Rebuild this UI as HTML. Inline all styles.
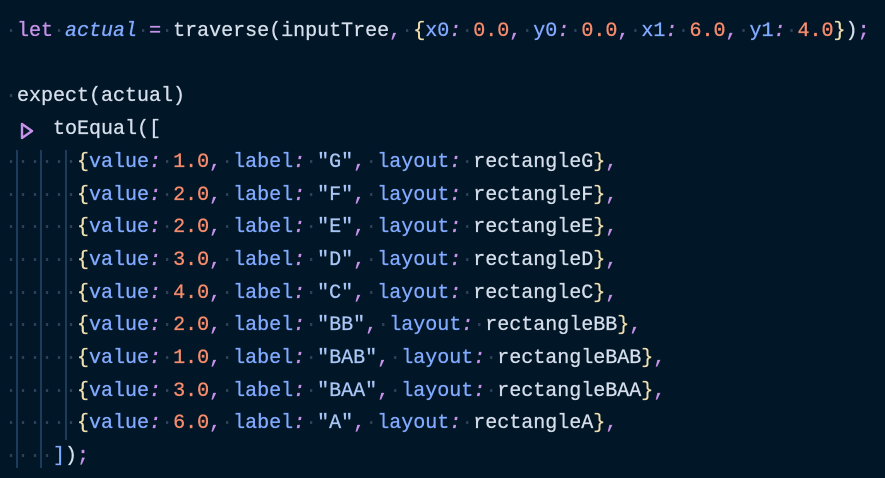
<!DOCTYPE html>
<html><head><meta charset="utf-8"><style>
html,body{margin:0;padding:0;background:#011627;width:885px;height:478px;overflow:hidden}
pre{margin:0;position:absolute;left:5px;top:16px;font-family:"Liberation Mono",monospace;font-size:20px;line-height:32.7px;color:#d6deeb;white-space:pre;-webkit-text-stroke:0.3px currentColor}
.k{color:#c792ea}.v{color:#82aaff;font-style:italic}.p{color:#82aaff}.n{color:#f78c6c}.c{color:#c792ea;font-style:italic}.cm{color:#c792ea}.s{color:#a9c6f5}.b{color:#f0dfaf}.d{color:#2e4058;-webkit-text-stroke:0}
.g{position:absolute;width:2px;background:#1d3b5a}
</style></head><body>
<div class="g" style="left:16px;top:150px;height:318px"></div>
<div class="g" style="left:40px;top:150px;height:318px"></div>
<div class="g" style="left:65px;top:150px;height:290px"></div>
<svg style="position:absolute;left:19px;top:122px" width="16" height="18" viewBox="0 0 16 18"><path d="M3 2 L13 9 L3 16 Z" fill="none" stroke="#c792ea" stroke-width="2.4" stroke-linejoin="round"/></svg>
<pre><span class="d">·</span><span class="k">let</span><span class="d">·</span><span class="v">actual</span><span class="d">·</span><span class="k">=</span><span class="d">·</span>traverse(inputTree<span class="cm">,</span><span class="d">·</span><span class="b">{</span><span class="p">x0</span><span class="c">:</span><span class="d">·</span><span class="n">0.0</span><span class="cm">,</span><span class="d">·</span><span class="p">y0</span><span class="c">:</span><span class="d">·</span><span class="n">0.0</span><span class="cm">,</span><span class="d">·</span><span class="p">x1</span><span class="c">:</span><span class="d">·</span><span class="n">6.0</span><span class="cm">,</span><span class="d">·</span><span class="p">y1</span><span class="c">:</span><span class="d">·</span><span class="n">4.0</span><span class="b">}</span>)<span class="cm">;</span>

<span class="d">·</span>expect(actual)
    toEqual([
<span class="d">······</span><span class="b">{</span><span class="p">value</span><span class="c">:</span><span class="d">·</span><span class="n">1.0</span><span class="cm">,</span><span class="d">·</span><span class="p">label</span><span class="c">:</span><span class="d">·</span><span class="s">"G"</span><span class="cm">,</span><span class="d">·</span><span class="p">layout</span><span class="c">:</span><span class="d">·</span>rectangleG<span class="b">}</span><span class="cm">,</span>
<span class="d">······</span><span class="b">{</span><span class="p">value</span><span class="c">:</span><span class="d">·</span><span class="n">2.0</span><span class="cm">,</span><span class="d">·</span><span class="p">label</span><span class="c">:</span><span class="d">·</span><span class="s">"F"</span><span class="cm">,</span><span class="d">·</span><span class="p">layout</span><span class="c">:</span><span class="d">·</span>rectangleF<span class="b">}</span><span class="cm">,</span>
<span class="d">······</span><span class="b">{</span><span class="p">value</span><span class="c">:</span><span class="d">·</span><span class="n">2.0</span><span class="cm">,</span><span class="d">·</span><span class="p">label</span><span class="c">:</span><span class="d">·</span><span class="s">"E"</span><span class="cm">,</span><span class="d">·</span><span class="p">layout</span><span class="c">:</span><span class="d">·</span>rectangleE<span class="b">}</span><span class="cm">,</span>
<span class="d">······</span><span class="b">{</span><span class="p">value</span><span class="c">:</span><span class="d">·</span><span class="n">3.0</span><span class="cm">,</span><span class="d">·</span><span class="p">label</span><span class="c">:</span><span class="d">·</span><span class="s">"D"</span><span class="cm">,</span><span class="d">·</span><span class="p">layout</span><span class="c">:</span><span class="d">·</span>rectangleD<span class="b">}</span><span class="cm">,</span>
<span class="d">······</span><span class="b">{</span><span class="p">value</span><span class="c">:</span><span class="d">·</span><span class="n">4.0</span><span class="cm">,</span><span class="d">·</span><span class="p">label</span><span class="c">:</span><span class="d">·</span><span class="s">"C"</span><span class="cm">,</span><span class="d">·</span><span class="p">layout</span><span class="c">:</span><span class="d">·</span>rectangleC<span class="b">}</span><span class="cm">,</span>
<span class="d">······</span><span class="b">{</span><span class="p">value</span><span class="c">:</span><span class="d">·</span><span class="n">2.0</span><span class="cm">,</span><span class="d">·</span><span class="p">label</span><span class="c">:</span><span class="d">·</span><span class="s">"BB"</span><span class="cm">,</span><span class="d">·</span><span class="p">layout</span><span class="c">:</span><span class="d">·</span>rectangleBB<span class="b">}</span><span class="cm">,</span>
<span class="d">······</span><span class="b">{</span><span class="p">value</span><span class="c">:</span><span class="d">·</span><span class="n">1.0</span><span class="cm">,</span><span class="d">·</span><span class="p">label</span><span class="c">:</span><span class="d">·</span><span class="s">"BAB"</span><span class="cm">,</span><span class="d">·</span><span class="p">layout</span><span class="c">:</span><span class="d">·</span>rectangleBAB<span class="b">}</span><span class="cm">,</span>
<span class="d">······</span><span class="b">{</span><span class="p">value</span><span class="c">:</span><span class="d">·</span><span class="n">3.0</span><span class="cm">,</span><span class="d">·</span><span class="p">label</span><span class="c">:</span><span class="d">·</span><span class="s">"BAA"</span><span class="cm">,</span><span class="d">·</span><span class="p">layout</span><span class="c">:</span><span class="d">·</span>rectangleBAA<span class="b">}</span><span class="cm">,</span>
<span class="d">······</span><span class="b">{</span><span class="p">value</span><span class="c">:</span><span class="d">·</span><span class="n">6.0</span><span class="cm">,</span><span class="d">·</span><span class="p">label</span><span class="c">:</span><span class="d">·</span><span class="s">"A"</span><span class="cm">,</span><span class="d">·</span><span class="p">layout</span><span class="c">:</span><span class="d">·</span>rectangleA<span class="b">}</span><span class="cm">,</span>
<span class="d">····</span><span class="p">]</span>)<span class="cm">;</span></pre>
</body></html>
